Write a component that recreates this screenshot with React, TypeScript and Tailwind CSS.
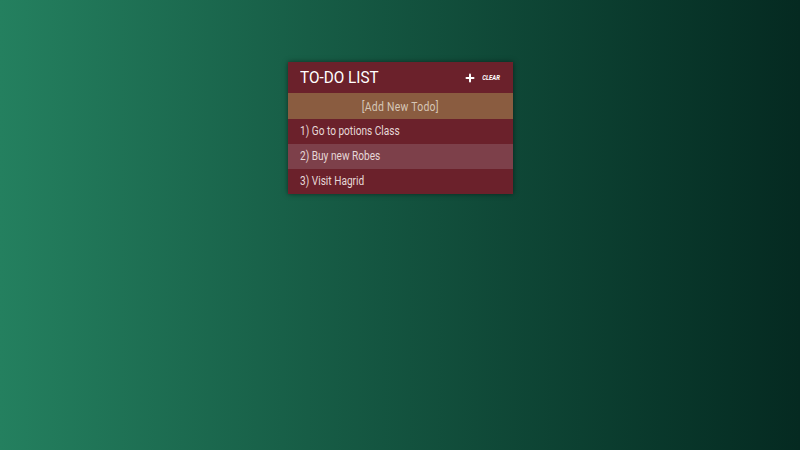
import { Plus } from 'lucide-react';

const TODOS = ['Go to potions Class', 'Buy new Robes', 'Visit Hagrid'];

export default function App() {
  return (
    <div className="w-[800px] h-[450px] bg-gradient-to-r from-[#24805f] to-[#052a21] font-['Roboto',sans-serif] flex justify-center pt-[62px]">
      <div className="w-[225px] h-fit bg-[#6b212b] shadow-[0_0_5px_rgba(0,0,0,0.5)]">
        <div className="h-[31px] flex items-center justify-between pl-[12px] pr-[13px]">
          <h1 className="text-[17px] text-white leading-none scale-x-[0.9] origin-left">TO-DO LIST</h1>
          <div className="flex items-center gap-[3px] text-white">
            <Plus size={12} strokeWidth={4} />
            <span className="text-[7px] font-bold italic pt-[2px] scale-x-[0.85] origin-right">CLEAR</span>
          </div>
        </div>
        <div className="h-[26px] bg-[#8a5c40] flex items-center justify-center pt-[1px] text-[12px] text-[#d6c6b6]">
          <span className="scale-x-[0.87] origin-center tracking-[0.3px]">[Add New Todo]</span>
        </div>
        {TODOS.map((t, i) => (
          <div
            key={t}
            className={
              'h-[25px] flex items-center pl-[12px] text-[12.5px] text-[#e6d8d8] ' +
              (i === 1 ? 'bg-[#7d404a]' : 'bg-[#6b212b]')
            }
          >
            <span className="scale-x-[0.81] origin-left whitespace-nowrap">
              {i + 1}) {t}
            </span>
          </div>
        ))}
      </div>
    </div>
  );
}
